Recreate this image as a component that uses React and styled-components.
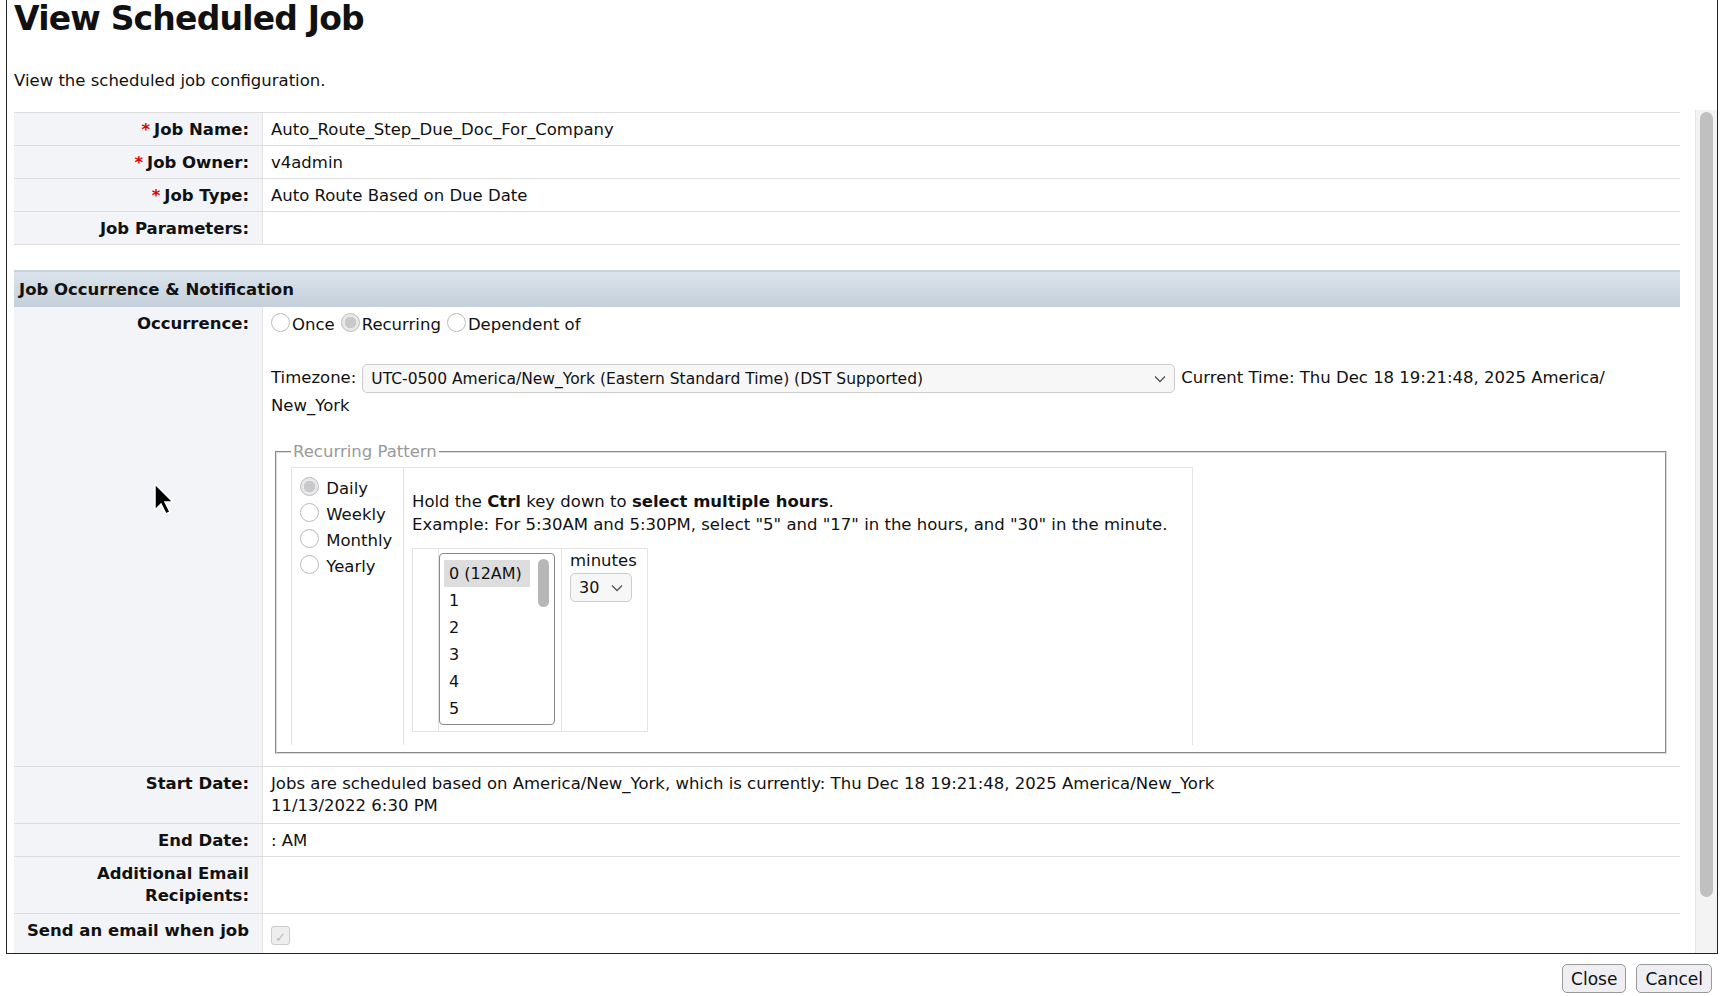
import React from "react";
import styled, { createGlobalStyle } from "styled-components";

const G = createGlobalStyle`
  html,body{margin:0;padding:0;background:#fff;}
  body{font-family:"DejaVu Sans","Liberation Sans",sans-serif;font-size:16.5px;color:#111;}
  *{box-sizing:border-box;}
`;
const Page = styled.div`width:1720px;height:996px;display:flex;flex-direction:column;`;
const Frame = styled.div`
  position:relative;margin-left:6px;width:1712px;height:954px;border:1px solid #222;border-top:none;overflow:hidden;
  padding:0 40px 0 7px;
`;
const Title = styled.h1`margin:-4px 0 0;font-size:33px;font-weight:bold;letter-spacing:-0.8px;line-height:46px;`;
const Desc = styled.p`margin:29px 0 22px;`;
const Table = styled.div`display:grid;grid-template-columns:249px 1fr;border-top:1px solid #ddd;width:1666px;`;
const Label = styled.div`
  background:#f2f4f7;text-align:right;font-weight:bold;padding:6px 13px 0 8px;border-bottom:1px solid #ddd;border-right:1px solid #e2e2e2;
  min-height:${p=>p.h||33}px;line-height:22px;white-space:nowrap;
`;
const Value = styled.div`padding:6px 8px 0;border-bottom:1px solid #ddd;min-height:${p=>p.h||33}px;line-height:22px;`;
const Star = styled.span`color:#d00;margin-right:4px;`;
const Section = styled.div`
  margin-top:25px;height:37px;width:1666px;background:linear-gradient(#dbe4ec,#c3cfda);font-weight:bold;padding:8px 5px;border-top:2px solid #c8d2dc;
`;
const Radio = styled.span`
  display:inline-block;width:19px;height:19px;border-radius:50%;border:1px solid #bbb;background:${p=>p.on?"radial-gradient(#c8c8cc 45%,#e8e8e8 50%)":"#fff"};
  vertical-align:-2px;margin-right:2px;
`;
const Opt = styled.span`margin-right:6px;`;
const TzRow = styled.div`margin-top:28px;line-height:26px;`;
const Select = styled.span`
  display:inline-flex;justify-content:space-between;align-items:center;width:813px;height:29px;border:1px solid #ccc;border-radius:5px;
  background:#f7f7f7;padding:0 8px;margin:0 6px 0 6px;font-size:15.5px;vertical-align:middle;
`;
const Field = styled.fieldset`
  margin:22px 5px 6px 4px;border:2px groove #ddd;padding:8px 14px 10px 14px;height:313px;
  legend{color:#999;padding:0 2px;}
`;
const Inner = styled.div`display:grid;grid-template-columns:112px 790px;border:1px solid #e4e4e4;border-bottom:none;height:278px;width:902px;margin-top:-4px;`;
const Freq = styled.div`border-right:1px solid #e4e4e4;padding:8px 8px;line-height:26px;`;
const Right = styled.div`padding:22px 8px 0;line-height:23px;white-space:nowrap;`;
const Hours = styled.div`display:flex;margin-top:12px;border:1px solid #e4e4e4;width:236px;height:184px;`;
const Gap = styled.div`width:26px;border-right:1px solid #e4e4e4;`;
const List = styled.div`
  position:relative;margin:4px 6px 6px 0;width:116px;border:1px solid #888;border-radius:4px;padding:6px 24px 0 4px;overflow:hidden;
`;
const Item = styled.div`line-height:27px;padding-left:5px;background:${p=>p.sel?"#ddd":"transparent"};font-size:16px;`;
const Thumb = styled.div`position:absolute;right:5px;top:5px;width:11px;height:48px;border-radius:6px;background:#b7b7b7;`;
const Mins = styled.div`padding:0 8px;border-left:1px solid #e4e4e4;line-height:24px;`;
const Small = styled.span`
  display:inline-flex;gap:12px;align-items:center;height:29px;padding:0 8px;border:1px solid #ccc;border-radius:5px;background:#f7f7f7;font-size:16px;
`;
const Check = styled.span`display:inline-block;width:19px;height:19px;border:1px solid #ccc;border-radius:3px;background:#eee;color:#bbb;font-size:13px;text-align:center;margin-top:6px;`;
const Scroll = styled.div`position:absolute;right:0;top:110px;bottom:0;width:22px;background:#f3f3f3;border-left:1px solid #e4e4e4;
  &::after{content:"";position:absolute;left:4px;right:4px;top:2px;height:785px;border-radius:8px;background:#c0c0c0;}`;
const Foot = styled.div`display:flex;justify-content:flex-end;gap:10px;padding:10px 8px 0;`;
const Btn = styled.button`font:inherit;font-size:17px;height:29px;padding:0 8px;border:1px solid #999;border-radius:5px;background:#eeeef3;color:#111;`;
const Cursor = styled.svg`position:absolute;left:146px;top:483px;`;
const Chev = () => <svg width="12" height="8" viewBox="0 0 12 8"><path d="M1 1.5l5 5 5-5" stroke="#555" fill="none" strokeWidth="1.3"/></svg>;

export default function App(){
  return <Page><G/>
    <Frame>
      <Title>View Scheduled Job</Title>
      <Desc>View the scheduled job configuration.</Desc>
      <Table>
        <Label><Star>*</Star>Job Name:</Label><Value>Auto_Route_Step_Due_Doc_For_Company</Value>
        <Label><Star>*</Star>Job Owner:</Label><Value>v4admin</Value>
        <Label><Star>*</Star>Job Type:</Label><Value>Auto Route Based on Due Date</Value>
        <Label>Job Parameters:</Label><Value/>
      </Table>
      <Section>Job Occurrence &amp; Notification</Section>
      <Table style={{borderTop:"none"}}>
        <Label h={460}>Occurrence:</Label>
        <Value h={460}>
          <div><Radio/><Opt>Once</Opt><Radio on/><Opt>Recurring</Opt><Radio/>Dependent of</div>
          <TzRow>Timezone:<Select>UTC-0500 America/New_York (Eastern Standard Time) (DST Supported)<Chev/></Select>Current Time: Thu Dec 18 19:21:48, 2025 America/<br/>New_York</TzRow>
          <Field><legend>Recurring Pattern</legend>
            <Inner>
              <Freq>
                <div><Radio on/> Daily</div><div><Radio/> Weekly</div><div><Radio/> Monthly</div><div><Radio/> Yearly</div>
              </Freq>
              <Right>
                <div>Hold the <b>Ctrl</b> key down to <b>select multiple hours</b>.</div>
                <div>Example: For 5:30AM and 5:30PM, select "5" and "17" in the hours, and "30" in the minute.</div>
                <Hours><Gap/>
                  <List>{["0 (12AM)","1","2","3","4","5"].map((t,i)=><Item key={t} sel={i===0}>{t}</Item>)}<Thumb/></List>
                  <Mins>minutes<br/><Small>30<Chev/></Small></Mins>
                </Hours>
              </Right>
            </Inner>
          </Field>
        </Value>
        <Label h={57}>Start Date:</Label><Value h={57}>Jobs are scheduled based on America/New_York, which is currently: Thu Dec 18 19:21:48, 2025 America/New_York<br/>11/13/2022 6:30 PM</Value>
        <Label>End Date:</Label><Value>: AM</Value>
        <Label h={57}>Additional Email<br/>Recipients:</Label><Value h={57}/>
        <Label h={40}>Send an email when job</Label><Value h={40}><Check>✓</Check></Value>
      </Table>
      <Scroll/>
      <Cursor width="22" height="34" viewBox="0 0 22 34"><path d="M2 1v26l6-6 5 10 4-2-5-10h8z" fill="#000" stroke="#fff" strokeWidth="1.5"/></Cursor>
    </Frame>
    <Foot><Btn>Close</Btn><Btn>Cancel</Btn></Foot>
  </Page>;
}
